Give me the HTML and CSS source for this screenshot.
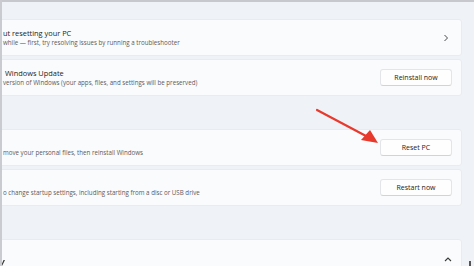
FILE: index.html
```html
<!DOCTYPE html>
<html lang="en">
<head>
    <meta charset="UTF-8">
    <meta name="viewport" content="width=device-width, initial-scale=1.0">
    <title>Recovery</title>
    <link rel="stylesheet" href="styles.css">
</head>
<body>
    <div class="top-bar"></div>

    <div class="page">
        <div class="group">
            <div class="card">
                <div class="text">
                    <p class="title">ut resetting your PC</p>
                    <p class="desc">while — first, try resolving issues by running a troubleshooter</p>
                </div>
                <svg class="chevron" width="6" height="8" viewBox="0 0 6 8">
                    <path d="M1.5 1 L4.5 4 L1.5 7" fill="none" stroke="#333" stroke-width="0.9"/>
                </svg>
            </div>
            <div class="card">
                <div class="text">
                    <p class="title shift">Windows Update</p>
                    <p class="desc">version of Windows (your apps, files, and settings will be preserved)</p>
                </div>
                <button class="btn">Reinstall now</button>
            </div>
        </div>

        <div class="group">
            <div class="card">
                <div class="text">
                    <p class="desc lower">move your personal files, then reinstall Windows</p>
                </div>
                <button class="btn">Reset PC</button>
            </div>
            <div class="card">
                <div class="text">
                    <p class="desc lower">o change startup settings, including starting from a disc or USB drive</p>
                </div>
                <button class="btn">Restart now</button>
            </div>
        </div>

        <div class="group">
            <div class="card card-open">
                <svg class="chevron-up" width="10" height="7" viewBox="0 0 10 7">
                    <path d="M2 5 L5 2 L8 5" fill="none" stroke="#3a3a3a" stroke-width="1.1"/>
                </svg>
            </div>
        </div>
    </div>

    <!-- red annotation arrow pointing at Reset PC -->
    <svg class="arrow" width="474" height="266" viewBox="0 0 474 266">
        <line x1="317" y1="110" x2="366" y2="136" stroke="#e8392d" stroke-width="2.2" stroke-linecap="round"/>
        <polygon points="361,140 370,130 378,143" fill="#e8392d"/>
    </svg>

    <div class="cursor"></div>
    <div class="corner-mark"></div>
</body>
</html>
```

FILE: styles.css
```css
* {
    margin: 0;
    padding: 0;
    box-sizing: border-box;
}

body {
    width: 474px;
    height: 266px;
    overflow: hidden;
    position: relative;
    background: #eff2f7;
    font-family: "Open Sans", "Noto Sans", sans-serif;
    color: #1b1b1b;
    border-left: 2px solid #c9cbd0;
}

.top-bar {
    height: 2px;
    background: #c6c8cd;
}

.page {
    display: flex;
    flex-direction: column;
    gap: 33px;
    padding-top: 17px;
}

.group {
    display: flex;
    flex-direction: column;
    gap: 3px;
}

.card {
    display: flex;
    align-items: center;
    height: 37px;
    margin-left: -122px;
    margin-right: 12px;
    padding: 0 9px 0 122px;
    background: #fafbfd;
    border: 1px solid #e9ebef;
    border-radius: 3px;
}

.text {
    flex: 1;
    white-space: nowrap;
}

.title {
    font-size: 7.4px;
    line-height: 10px;
    color: #1b1b1b;
}

.title.shift {
    padding-left: 2px;
}

.desc {
    font-size: 6.2px;
    line-height: 9px;
    color: #5a5a5a;
}

.desc.lower {
    padding-top: 10px;
}

.chevron {
    margin-right: 3px;
    flex-shrink: 0;
}

.btn {
    width: 72px;
    height: 17px;
    flex-shrink: 0;
    font-family: "Open Sans", "Noto Sans", sans-serif;
    font-size: 7px;
    color: #1b1b1b;
    background: #fefefe;
    border: 1px solid #e4e5e8;
    border-bottom-color: #d2d3d6;
    border-radius: 3px;
}

.card-open {
    flex-shrink: 0;
    height: 40px;
    align-items: flex-start;
    justify-content: flex-end;
    padding-top: 16px;
    padding-right: 8px;
}

.chevron-up {
    display: block;
    flex-shrink: 0;
}

.arrow {
    position: absolute;
    left: -2px;
    top: 0;
}

.cursor {
    position: absolute;
    left: -2px;
    bottom: 0;
    width: 5px;
    height: 6px;
    background: #3a3a3a;
    clip-path: polygon(0 0, 40% 100%, 100% 0, 70% 0, 40% 60%, 30% 0);
}

.corner-mark {
    position: absolute;
    left: 467px;
    top: 261px;
    width: 2px;
    height: 5px;
    background: #555;
}
```
